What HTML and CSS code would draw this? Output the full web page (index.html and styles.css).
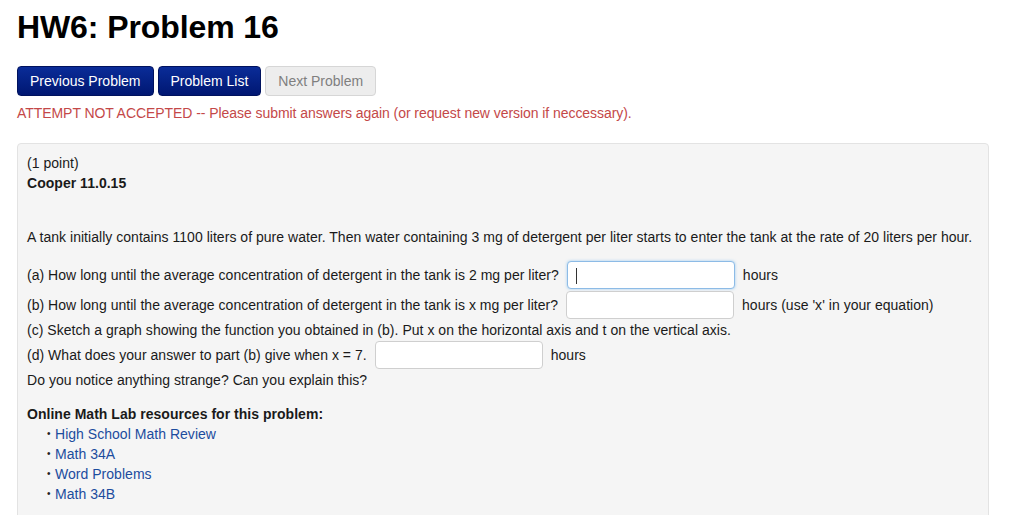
FILE: index.html
```html
<!DOCTYPE html>
<html>
<head>
<meta charset="utf-8">
<title>HW6: Problem 16</title>
<link rel="stylesheet" href="styles.css">
</head>
<body>
<div class="page">
  <h1 class="title">HW6: Problem 16</h1>
  <div class="nav">
    <span class="btn btn-primary">Previous Problem</span>
    <span class="btn btn-primary">Problem List</span>
    <span class="btn btn-disabled">Next Problem</span>
  </div>
  <div class="error">ATTEMPT NOT ACCEPTED -- Please submit answers again (or request new version if neccessary).</div>
  <div class="well">
    <div class="line">(1 point)</div>
    <div class="line bold">Cooper 11.0.15</div>
    <div class="line intro">A tank initially contains 1100 liters of pure water. Then water containing 3 mg of detergent per liter starts to enter the tank at the rate of 20 liters per hour.</div>
    <div class="parts">
      <div class="row"><span>(a) How long until the average concentration of detergent in the tank is 2 mg per liter?</span><span class="field focused"><span class="caret"></span></span><span>hours</span></div>
      <div class="row"><span>(b) How long until the average concentration of detergent in the tank is x mg per liter?</span><span class="field"></span><span>hours (use 'x' in your equation)</span></div>
      <div class="row short"><span>(c) Sketch a graph showing the function you obtained in (b). Put x on the horizontal axis and t on the vertical axis.</span></div>
      <div class="row"><span>(d) What does your answer to part (b) give when x = 7.</span><span class="field"></span><span>hours</span></div>
      <div class="row short"><span>Do you notice anything strange? Can you explain this?</span></div>
    </div>
    <div class="line bold resources">Online Math Lab resources for this problem:</div>
    <ul class="links">
      <li><a href="#">High School Math Review</a></li>
      <li><a href="#">Math 34A</a></li>
      <li><a href="#">Word Problems</a></li>
      <li><a href="#">Math 34B</a></li>
    </ul>
  </div>
</div>
</body>
</html>
```
FILE: styles.css
```css
* { box-sizing: border-box; }
html, body { margin: 0; padding: 0; background: #fff; }
body {
  font-family: "Liberation Sans", Arial, Helvetica, sans-serif;
  font-size: 14px;
  line-height: 20px;
  color: #1a1a1a;
}
.page { padding: 0 17px; }
.title {
  margin: 10px 0 0;
  font-size: 32px;
  line-height: 35px;
  font-weight: bold;
  color: #000;
  letter-spacing: -0.1px;
}
.nav {
  display: flex;
  gap: 4px;
  margin-top: 21px;
}
.btn {
  display: inline-flex;
  align-items: center;
  height: 30px;
  padding: 0 12px;
  border-radius: 4px;
  font-size: 14px;
}
.btn-primary {
  background: linear-gradient(#0a2c98, #001772);
  border: 1px solid #00125e;
  color: #fff;
}
.btn-disabled {
  background: #ededed;
  border: 1px solid #d6d6d6;
  color: #7f7f7f;
}
.error {
  margin-top: 7px;
  color: #c44848;
  letter-spacing: -0.06px;
}
.well {
  margin-top: 20px;
  width: 972px;
  background: #f5f5f5;
  border: 1px solid #e3e3e3;
  border-radius: 4px;
  padding: 9px 9px 20px;
  letter-spacing: 0.03px;
}
.bold { font-weight: bold; }
.intro { margin-top: 34px; }
.parts { margin-top: 13px; }
.row {
  display: flex;
  align-items: center;
  height: 30px;
  gap: 8px;
}
.row.short { height: 20px; }
.field {
  position: relative;
  display: block;
  width: 168px;
  height: 28px;
  background: #fff;
  border: 1px solid #cfcfcf;
  border-radius: 4px;
}
.field.focused {
  border-color: #8dbbe6;
  box-shadow: 0 0 3px rgba(82, 168, 236, 0.55);
}
.caret {
  position: absolute;
  left: 8px;
  top: 6px;
  width: 1px;
  height: 16px;
  background: #333;
}
.resources { margin-top: 14px; }
.links {
  list-style: none;
  margin: 0;
  padding: 0 0 0 28px;
}
.links li { position: relative; }
.links li::before {
  content: "\2022";
  position: absolute;
  left: -8px;
  top: 0;
  font-size: 10px;
  color: #222;
}
.links a {
  color: #1c4c9e;
  text-decoration: none;
}
```
